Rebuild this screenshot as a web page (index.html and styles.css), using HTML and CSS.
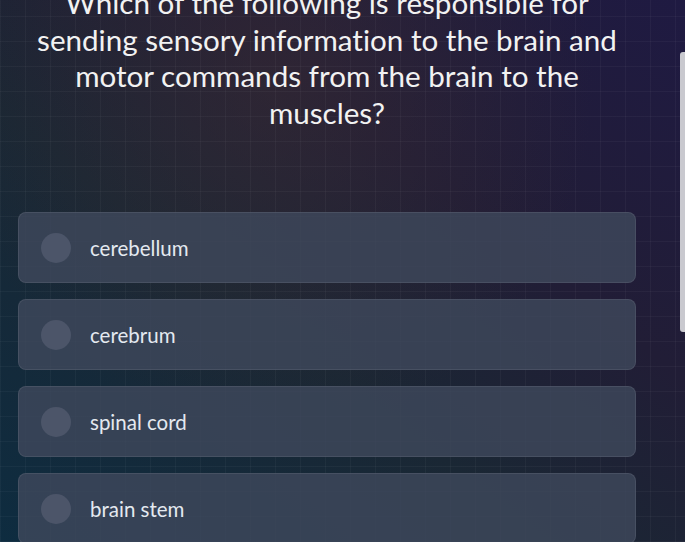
FILE: index.html
```html
<!DOCTYPE html>
<html lang="en">

<head>
    <meta charset="UTF-8">
    <meta name="viewport" content="width=device-width, initial-scale=1.0">
    <title>Quiz</title>
    <link rel="stylesheet" href="styles.css">
</head>

<body>
    <div class="quiz">
        <h1 class="question">Which of the following is responsible for sending sensory information to the brain and motor commands from the brain to the muscles?</h1>

        <div class="options">
            <label class="option">
                <span class="radio"></span>
                <span class="option-text">cerebellum</span>
            </label>
            <label class="option">
                <span class="radio"></span>
                <span class="option-text">cerebrum</span>
            </label>
            <label class="option">
                <span class="radio"></span>
                <span class="option-text">spinal cord</span>
            </label>
            <label class="option">
                <span class="radio"></span>
                <span class="option-text">brain stem</span>
            </label>
        </div>
    </div>

    <div class="scroll-thumb"></div>
</body>

</html>
```

FILE: styles.css
```css
/* Reset */
* {
    margin: 0;
    padding: 0;
    box-sizing: border-box;
}

/* Body Styling */
body {
    height: 100vh;
    overflow: hidden;
    font-family: 'Lato', sans-serif;
    font-variant-ligatures: none;
    color: #f2f2f2;
    background-color: #1c2230;
    background-image:
        repeating-linear-gradient(90deg, rgba(255, 255, 255, 0.035) 0 1px, transparent 1px 25px),
        repeating-linear-gradient(0deg, rgba(255, 255, 255, 0.035) 0 1px, transparent 1px 25px),
        radial-gradient(ellipse at 40% 15%, rgba(60, 45, 50, 0.5), transparent 55%),
        linear-gradient(to top right, #0e2c40 0%, #1a2734 40%, #211d36 65%, #1f1a42 100%);
    padding: 0 49px 0 18px;
    position: relative;
}

/* Quiz */
.quiz {
    display: flex;
    flex-direction: column;
    margin-top: -15px;
}

.question {
    font-size: 29.6px;
    font-weight: 400;
    line-height: 36.5px;
    text-align: center;
    padding: 0 10px;
    margin-bottom: 81px;
}

/* Options */
.options {
    display: flex;
    flex-direction: column;
    gap: 16px;
}

.option {
    display: flex;
    align-items: center;
    gap: 19px;
    height: 71px;
    padding: 0 22px;
    background: rgba(62, 72, 92, 0.82);
    border: 1px solid rgba(255, 255, 255, 0.08);
    border-radius: 8px;
    cursor: pointer;
}

.radio {
    width: 30px;
    height: 30px;
    border-radius: 50%;
    background: #4c5569;
    flex-shrink: 0;
}

.option-text {
    font-size: 20.5px;
    color: #e4e9f0;
}

/* Scrollbar thumb */
.scroll-thumb {
    position: absolute;
    top: 52px;
    right: 0;
    width: 5px;
    height: 280px;
    background: #c9c9cf;
    border-radius: 3px 0 0 3px;
}
```
